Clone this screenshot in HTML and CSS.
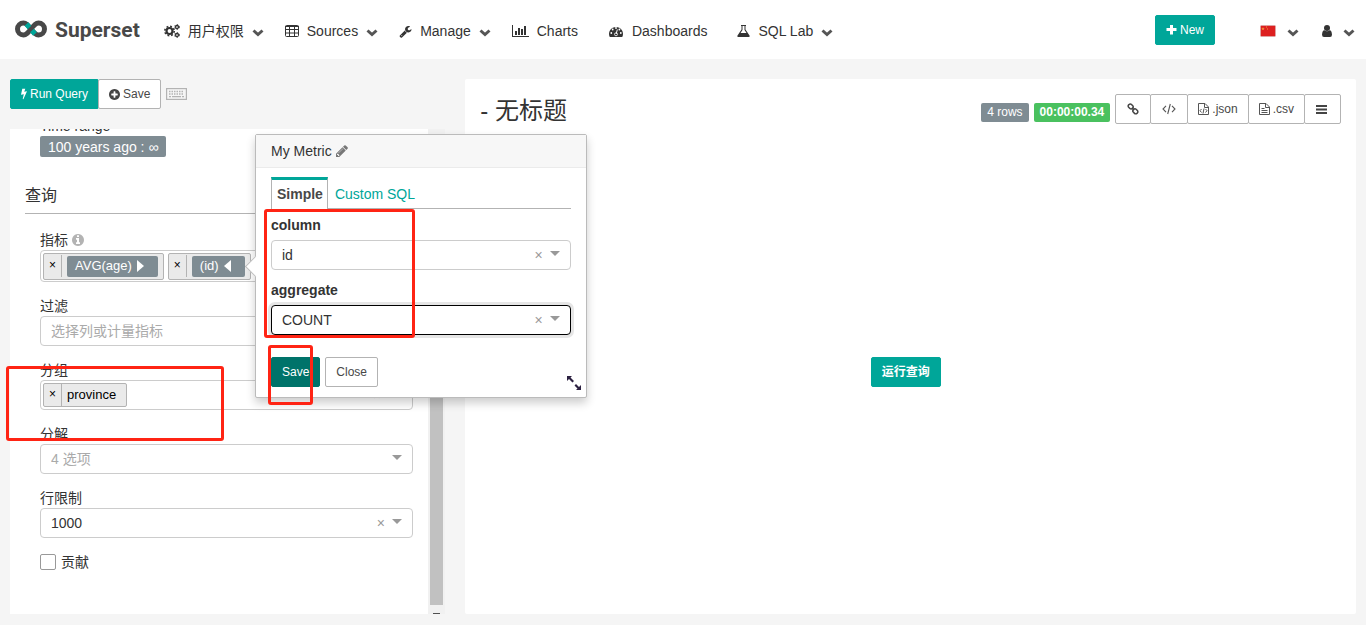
FILE: index.html
```html
<!DOCTYPE html>
<html lang="zh">
<head>
    <meta charset="UTF-8">
    <meta name="viewport" content="width=device-width, initial-scale=1.0">
    <title>Superset</title>
    <link rel="stylesheet" href="styles.css">
</head>
<body>
    <!-- shared icons -->
    <svg class="sprite" aria-hidden="true">
        <symbol id="chevron" viewBox="0 0 12 8"><path d="M1.500 1.500L6 5.500l4.500-4" fill="none" stroke="#555" stroke-width="3"/></symbol>
        <symbol id="arrow" viewBox="0 0 10 5"><path d="M0 0h10L5 5z" fill="#999"/></symbol>
    </svg>

    <header class="navbar">
        <a class="brand" href="#">
            <svg width="32" height="18" viewBox="0 0 32 18" fill="none" stroke-width="5">
                <path d="M16 9C12.500 4.500 11 3 8.500 3a6 6 0 0 0 0 12c2.500 0 4-1.500 7.500-6s5-6 7.500-6a6 6 0 0 1 0 12c-2.500 0-4-1.500-7.500-6z" stroke="#484848"/>
                <path d="M11.500 4l3 3.500M17 10.500l3 3.500" stroke="#00a699"/>
            </svg>
            <span>Superset</span>
        </a>
        <nav class="menu">
            <a href="#">
                <svg width="16" height="14" viewBox="0 0 16 14" fill="none" stroke="#333">
                    <circle cx="5.500" cy="7" r="3" stroke-width="2.200"/>
                    <circle cx="5.500" cy="7" r="4.700" stroke-width="1.600" stroke-dasharray="1.850 1.850"/>
                    <circle cx="13" cy="3" r="1.500" stroke-width="1.300"/>
                    <circle cx="13" cy="3" r="2.400" stroke-dasharray="1.250 1.250"/>
                    <circle cx="13" cy="11" r="1.500" stroke-width="1.300"/>
                    <circle cx="13" cy="11" r="2.400" stroke-dasharray="1.250 1.250"/>
                </svg>
                <span>用户权限</span>
                <svg class="chevron"><use href="#chevron"/></svg>
            </a>
            <a href="#">
                <svg width="14" height="12" viewBox="0 0 14 12" fill="none" stroke="#333">
                    <rect x="0.500" y="0.500" width="13" height="11" rx="1"/>
                    <path d="M0 1.500h14M0 4.500h14M0 8h14M4.500 1v11M9.500 1v11"/>
                </svg>
                <span>Sources</span>
                <svg class="chevron"><use href="#chevron"/></svg>
            </a>
            <a href="#">
                <svg width="13" height="13" viewBox="0 0 1792 1792" fill="#333"><path d="M448 1472q0-26-19-45t-45-19-45 19-19 45 19 45 45 19 45-19 19-45zm644-420l-682 682q-37 37-90 37-52 0-91-37l-106-108q-38-36-38-90 0-53 38-91l681-681q39 98 114.500 173.500t173.500 114.500zm634-435q0 39-23 106-47 134-164.500 217.500t-258.500 83.500q-185 0-316.500-131.500t-131.500-316.500 131.500-316.500 316.500-131.500q58 0 121.500 16.500t107.500 46.500q16 11 16 28t-16 28l-293 169v224l193 107q5-3 79-48.500t135.500-81 70.500-35.500q15 0 23.500 10t8.500 25z"/></svg>
                <span>Manage</span>
                <svg class="chevron"><use href="#chevron"/></svg>
            </a>
            <a class="plain" href="#">
                <svg width="17" height="12" viewBox="0 0 17 12" fill="#333"><path d="M0 0h1v11h16v1H0zM3 6h2v4H3zM6 3h2v7H6zM9 4h2v6H9zM12 1h2v9h-2z"/></svg>
                <span>Charts</span>
            </a>
            <a class="plain" href="#">
                <svg width="16" height="12" viewBox="0 0 16 12">
                    <path d="M1.500 11.500A7 7 0 1 1 14.500 11.500q-.3.500-.8.500H2.300q-.5 0-.8-.5z" fill="#333"/>
                    <g fill="#fff"><circle cx="3.300" cy="8" r=".9"/><circle cx="4.700" cy="4.500" r=".9"/><circle cx="8" cy="3" r=".9"/><circle cx="11.400" cy="4.500" r=".9"/><circle cx="12.800" cy="8" r=".9"/></g>
                    <path d="M9.300 4.500L8.200 9" stroke="#fff"/>
                    <circle cx="8" cy="9.300" r="1.500" fill="none" stroke="#fff" stroke-width=".8"/>
                </svg>
                <span>Dashboards</span>
            </a>
            <a href="#">
                <svg width="13" height="12" viewBox="0 0 13 12" fill="#333"><path d="M4 0h5v1H8.500v3.500l4 6q.7 1.500-.8 1.500H1.300q-1.500 0-.8-1.500l4-6V1H4zM5.500 1v4L3.500 8h6l-2-3V1z" fill-rule="evenodd"/></svg>
                <span>SQL Lab</span>
                <svg class="chevron"><use href="#chevron"/></svg>
            </a>
        </nav>
        <div class="nav-right">
            <button class="btn btn-primary btn-new">
                <svg width="11" height="11" viewBox="0 0 11 11" fill="#fff"><path d="M4 1h3v3h3.500v3H7v3.500H4V7H.5V4H4z"/></svg>
                New
            </button>
            <a href="#" aria-label="语言">
                <svg width="16" height="12" viewBox="0 0 16 12">
                    <rect x="0.500" y="0.500" width="15" height="11" rx="1" fill="#dd2020" stroke="#d9a8a8" stroke-width=".8"/>
                    <path d="M3 2l.5 1.200 1.200.1-.9.8.3 1.200L3 4.600l-1.100.7.3-1.200-.9-.8 1.200-.1zM6 1.500h1v1H6zM7 3.500h1v1H7z" fill="#f0983a"/>
                </svg>
                <svg class="chevron"><use href="#chevron"/></svg>
            </a>
            <a href="#" aria-label="用户">
                <svg width="10" height="12" viewBox="0 0 10 12" fill="#333"><circle cx="5" cy="3" r="3"/><path d="M2 5q3 2.500 6 0 2 1 2 4.500 0 2.500-2 2.500H2q-2 0-2-2.500Q0 6 2 5z"/></svg>
                <svg class="chevron"><use href="#chevron"/></svg>
            </a>
        </div>
    </header>

    <main class="explore">
        <section class="controls">
            <div class="toolbar">
                <div class="btn-group">
                    <button class="btn btn-primary">
                        <svg width="6" height="12" viewBox="0 0 7 12" fill="#fff"><path d="M1.500 0H5L3.800 3.500 7 2.800 2.800 12 2 11.700l1.300-5.500L0 7z"/></svg>
                        Run Query
                    </button>
                    <button class="btn">
                        <svg width="11" height="11" viewBox="128 128 1536 1536" fill="#444"><path d="M1344 960v-128q0-26-19-45t-45-19h-256v-256q0-26-19-45t-45-19h-128q-26 0-45 19t-19 45v256h-256q-26 0-45 19t-19 45v128q0 26 19 45t45 19h256v256q0 26 19 45t45 19h128q26 0 45-19t19-45v-256h256q26 0 45-19t19-45zm320-64q0 209-103 385.500t-279.500 279.500-385.500 103-385.500-103-279.500-279.500-103-385.500 103-385.500 279.500-279.500 385.500-103 385.500 103 279.500 279.500 103 385.500z"/></svg>
                        Save
                    </button>
                </div>
                <svg width="21" height="12" viewBox="0 0 21 12" fill="none" stroke="#b3b3b3">
                    <rect x="0.500" y="0.500" width="20" height="11" stroke-width="1.400"/>
                    <path d="M3 3.500h15M3 6h15" stroke-dasharray="1.500 1" stroke-width="1.300"/>
                    <path d="M3 8.700h2M6 8.700h9M16 8.700h2" stroke-width="1.300"/>
                </svg>
            </div>

            <div class="panel">
                <form class="fields">
                    <div class="field time">
                        <span class="name">Time range</span>
                        <button type="button" class="range">100 years ago : <span>∞</span></button>
                    </div>
                    <h2>查询</h2>
                    <div class="field">
                        <span class="name">指标
                            <svg width="12" height="12" viewBox="128 128 1536 1536" fill="#b3b3b3"><path d="M1152 1376v-160q0-14-9-23t-23-9h-96v-512q0-14-9-23t-23-9h-320q-14 0-23 9t-9 23v160q0 14 9 23t23 9h96v320h-96q-14 0-23 9t-9 23v160q0 14 9 23t23 9h448q14 0 23-9t9-23zm-128-896v-160q0-14-9-23t-23-9h-192q-14 0-23 9t-9 23v160q0 14 9 23t23 9h192q14 0 23-9t9-23zm640 416q0 209-103 385.500t-279.500 279.500-385.500 103-385.500-103-279.500-279.500-103-385.500 103-385.500 279.500-279.500 385.500-103 385.500 103 279.500 279.500 103 385.500z"/></svg>
                        </span>
                        <div class="select tokens metrics">
                            <div class="token">
                                <button type="button" class="remove">×</button>
                                <span class="metric">AVG(age) <svg width="8" height="12" viewBox="0 0 8 12"><path d="M0 0l7 6-7 6z" fill="#fff"/></svg></span>
                            </div>
                            <div class="token">
                                <button type="button" class="remove">×</button>
                                <span class="metric">(id) <svg width="8" height="12" viewBox="0 0 8 12"><path d="M7 0L0 6l7 6z" fill="#fff"/></svg></span>
                            </div>
                        </div>
                    </div>
                    <div class="field">
                        <label class="name" for="filters">过滤</label>
                        <div class="select">
                            <select id="filters" class="empty"><option>选择列或计量指标</option></select>
                            <svg class="arrow"><use href="#arrow"/></svg>
                        </div>
                    </div>
                    <div class="field">
                        <span class="name">分组</span>
                        <div class="select tokens">
                            <div class="token">
                                <button type="button" class="remove">×</button>
                                <span class="value">province</span>
                            </div>
                            <button type="button" class="clear">×</button>
                            <svg class="arrow"><use href="#arrow"/></svg>
                        </div>
                    </div>
                    <div class="field">
                        <label class="name" for="columns">分解</label>
                        <div class="select">
                            <select id="columns" class="empty"><option>4 选项</option></select>
                            <svg class="arrow"><use href="#arrow"/></svg>
                        </div>
                    </div>
                    <div class="field">
                        <label class="name" for="limit">行限制</label>
                        <div class="select">
                            <select id="limit"><option>1000</option></select>
                            <button type="button" class="clear">×</button>
                            <svg class="arrow"><use href="#arrow"/></svg>
                        </div>
                    </div>
                    <div class="field check">
                        <input type="checkbox" id="contribution">
                        <label for="contribution">贡献</label>
                    </div>
                </form>
                <div class="scrollbar">
                    <div class="thumb"></div>
                    <div class="scroll-end"></div>
                </div>
            </div>
        </section>

        <section class="result">
            <div class="chart">
                <div class="chart-head">
                    <h1>- 无标题</h1>
                    <div class="chart-tools">
                        <span class="label">4 rows</span>
                        <span class="label label-success">00:00:00.34</span>
                        <div class="btn-group">
                            <button class="btn btn-icon" aria-label="link">
                                <svg width="12" height="12" viewBox="0 0 12 12" fill="none" stroke="#444" stroke-width="1.500"><rect x="-2.600" y="-2" width="5.200" height="4" rx="1.700" transform="translate(3.700 3.500) rotate(45)"/><rect x="-2.600" y="-2" width="5.200" height="4" rx="1.700" transform="translate(8.300 8.300) rotate(45)"/><path d="M4.800 4.800l2.400 2.400"/></svg>
                            </button>
                            <button class="btn btn-icon" aria-label="code">
                                <svg width="14" height="12" viewBox="0 0 14 12" fill="none" stroke="#555" stroke-width="1.100"><path d="M4 2.800L1 6l3 3.200M10 2.800L13 6l-3 3.200M8.300 1L5.700 11"/></svg>
                            </button>
                            <button class="btn">
                                <svg width="11" height="12" viewBox="0 0 11 12" fill="none" stroke="#555"><path d="M.5.500h6.500l3.500 3.500v7.500H.5zM6.500.5v4h4M3.500 6L2 7.700l1.500 1.800M7.500 6L9 7.700 7.500 9.500M6 5.500l-1 5"/></svg>
                                .json
                            </button>
                            <button class="btn">
                                <svg width="11" height="12" viewBox="0 0 11 12" fill="none" stroke="#555"><path d="M.5.500h6.500l3.500 3.500v7.500H.5zM6.500.5v4h4M2.500 5.500h3M2.500 7.500h6M2.500 9.500h6"/></svg>
                                .csv
                            </button>
                            <button class="btn btn-icon" aria-label="menu">
                                <svg width="13" height="9" viewBox="0 0 13 9" fill="#444"><path d="M0 0h11v2H0zM0 3.500h11v2H0zM0 7h11v2H0z"/></svg>
                            </button>
                        </div>
                    </div>
                </div>
                <div class="chart-body">
                    <button class="btn btn-primary">运行查询</button>
                </div>
            </div>
        </section>
    </main>

    <!-- metric editor -->
    <div class="popover">
        <div class="popover-title">
            <span>My Metric</span>
            <svg width="12" height="12" viewBox="128 128 1536 1536" fill="#777"><path d="M491 1536l91-91-235-235-91 91v107h128v128h107zm523-928q0-22-22-22-10 0-17 7l-542 542q-7 7-7 17 0 22 22 22 10 0 17-7l542-542q7-7 7-17zm-54-192l416 416-832 832h-416v-416zm683 96q0 53-37 90l-166 166-416-416 166-165q36-38 90-38 53 0 91 38l235 234q37 39 37 91z"/></svg>
        </div>
        <div class="popover-content">
            <div class="tabs">
                <a class="active" href="#">Simple</a>
                <a href="#">Custom SQL</a>
            </div>
            <label for="column">column</label>
            <div class="select">
                <select id="column"><option>id</option></select>
                <button class="clear">×</button>
                <svg class="arrow"><use href="#arrow"/></svg>
            </div>
            <label for="aggregate">aggregate</label>
            <div class="select focused">
                <select id="aggregate"><option>COUNT</option></select>
                <button class="clear">×</button>
                <svg class="arrow"><use href="#arrow"/></svg>
            </div>
            <div class="actions">
                <button class="btn btn-primary btn-save">Save</button>
                <button class="btn">Close</button>
            </div>
        </div>
        <svg class="resize" width="16" height="16" viewBox="0 0 16 16"><path d="M1 1h5L4.500 2.500 8 6 6.500 7.500 3 4 1 6zM15 15h-5l1.500-1.500L8.500 10.500 10 9l3 3 2-2z" fill="#2b2040"/></svg>
    </div>

    <!-- highlighted steps -->
    <div class="mark mark-metric"></div>
    <div class="mark mark-save"></div>
    <div class="mark mark-group"></div>
</body>
</html>
```
FILE: styles.css
```css
* {
    box-sizing: border-box;
}
body {
    margin: 0;
    height: 100vh;
    display: flex;
    flex-direction: column;
    background: #f5f5f5;
    color: #333;
    font-family: "Liberation Sans", "Noto Sans CJK SC", sans-serif;
    font-size: 14px;
    line-height: 20px;
}
a {
    color: #333;
    text-decoration: none;
}
svg {
    flex: none;
}
button,
select {
    font-family: inherit;
    color: inherit;
}
.sprite {
    position: absolute;
    width: 0;
    height: 0;
}

/* navbar */
.navbar {
    flex: none;
    display: flex;
    align-items: center;
    height: 59px;
    padding: 0 11px 0 15px;
    background: #fff;
}
.brand {
    display: flex;
    align-items: center;
    gap: 8px;
    margin-right: 24px;
    color: #484848;
    font: bold 21px/24px Roboto, sans-serif;
}
.brand svg {
    margin-bottom: 2px;
}
.menu {
    display: flex;
    gap: 21px;
    padding-top: 3px;
}
.menu a,
.nav-right a {
    display: flex;
    align-items: center;
    gap: 8px;
}
.menu .plain {
    padding-right: 9px;
}
.chevron {
    width: 12px;
    height: 8px;
    margin-top: 4px;
}
.nav-right {
    display: flex;
    align-items: center;
    gap: 23px;
    margin-left: auto;
}
.nav-right a {
    gap: 11px;
    padding-top: 3px;
}
.btn-new {
    margin-right: 22px;
}

/* buttons */
.btn {
    display: inline-flex;
    align-items: center;
    justify-content: center;
    gap: 3px;
    height: 30px;
    padding: 0 10px;
    border: 1px solid #b3b3b3;
    border-radius: 2px;
    background: #fff;
    color: #484848;
    font-size: 12px;
    line-height: 18px;
    cursor: pointer;
}
.btn-primary {
    border-color: #00a699;
    background: #00a699;
    color: #fff;
}
.btn-save {
    border-color: #00736a;
    background: #00736a;
}
.btn-icon {
    padding: 0 11px;
}
.btn-group {
    display: flex;
}
.btn-group .btn + .btn {
    margin-left: -1px;
}

/* layout */
.explore {
    flex: 1;
    min-height: 0;
    display: grid;
    grid-template-columns: 1fr 2fr;
    padding: 20px 0 11px;
}
.controls,
.result {
    display: flex;
    flex-direction: column;
    min-width: 0;
    min-height: 0;
    padding: 0 10px;
}
.toolbar {
    display: flex;
    align-items: center;
    gap: 5px;
    margin-bottom: 20px;
}
.panel {
    flex: 1;
    min-height: 0;
    display: flex;
    overflow: hidden;
    background: #fff;
}
.scrollbar {
    display: flex;
    flex-direction: column;
    align-items: center;
    width: 17px;
    padding-top: 20px;
    background: #f1f1f1;
}
.thumb {
    flex: 1;
    width: 13px;
    background: #c1c1c1;
}
.scroll-end {
    width: 7px;
    height: 9px;
    border-bottom: 1px solid #505050;
}

/* control panel */
.fields {
    flex: 1;
    min-width: 0;
    margin-top: -13px;
    padding: 0 15px;
}
.fields h2 {
    margin: 0 0 16px;
    padding: 2px 0 5px;
    border-bottom: 1px solid #b3b3b3;
    font-size: 16px;
    font-weight: normal;
    line-height: 24px;
}
.field {
    margin: 0 0 14px 15px;
}
.name {
    display: block;
}
.name svg {
    vertical-align: -1px;
}
.time {
    margin-bottom: 25px;
}
.range {
    display: block;
    height: 21px;
    padding: 0 8px;
    border: 0;
    border-radius: 2px;
    background: #7f8c93;
    color: #fff;
    font-size: 14px;
    line-height: 20px;
}
.select {
    display: flex;
    align-items: center;
    height: 30px;
    padding-right: 10px;
    border: 1px solid #ccc;
    border-radius: 4px;
    background: #fff;
}
.select select {
    flex: 1;
    min-width: 0;
    height: 28px;
    padding: 0 10px;
    border: 0;
    outline: 0;
    background: none;
    appearance: none;
    font-size: 14px;
}
.select .empty {
    color: #aaa;
}
.select .clear {
    width: 17px;
    margin-right: 3px;
    padding: 0;
    border: 0;
    background: none;
    color: #999;
    font-size: 14px;
    line-height: 20px;
}
.arrow {
    width: 10px;
    height: 5px;
    margin-bottom: 3px;
}
.focused {
    border-color: #000;
    box-shadow: 0 0 0 3px #e6e6e6;
}
.tokens {
    gap: 4px;
    padding-left: 2px;
}
.tokens .clear {
    margin-left: auto;
}
.metrics {
    height: 32px;
}
.token {
    display: flex;
    align-items: center;
    height: 24px;
    padding-right: 5px;
    border: 1px solid #b3b3b3;
    border-radius: 2px;
    background: #eaeaea;
    color: #000;
}
.remove {
    width: 18px;
    height: 22px;
    padding: 0 0 2px;
    border: 0;
    border-right: 1px solid #b3b3b3;
    background: none;
    font-size: 12px;
}
.value {
    padding: 0 5px;
    font-size: 13px;
}
.metrics .token {
    height: 27px;
}
.metric {
    display: flex;
    align-items: center;
    gap: 5px;
    height: 21px;
    margin-left: 5px;
    padding: 0 13px 0 8px;
    border-radius: 2px;
    background: #7f8c93;
    color: #fff;
    font-size: 13px;
}
.check {
    display: flex;
    align-items: center;
    gap: 5px;
}
.check input {
    width: 16px;
    height: 16px;
    margin: 0;
    border: 1px solid #999;
    border-radius: 2px;
    appearance: none;
}

/* chart */
.chart {
    flex: 1;
    display: flex;
    flex-direction: column;
    padding: 15px;
    border-radius: 2px;
    background: #fff;
}
.chart-head {
    display: flex;
    justify-content: space-between;
    align-items: flex-start;
}
.chart-head h1 {
    margin: 0;
    font-size: 24px;
    font-weight: normal;
    line-height: 34px;
}
.chart-tools {
    display: flex;
    align-items: center;
    gap: 5px;
}
.label {
    height: 19px;
    margin-top: 6px;
    padding: 0 6px;
    border-radius: 2px;
    background: #7f8c93;
    color: #fff;
    font-size: 12px;
    line-height: 19px;
}
.label-success {
    background: #4ac15f;
    font-weight: bold;
}
.chart-body {
    flex: 1;
    display: flex;
    align-items: center;
    justify-content: center;
    padding: 17px 10px 0 0;
}
.chart-body .btn {
    font-weight: bold;
}

/* popover */
.popover {
    position: absolute;
    left: 255px;
    top: 134px;
    width: 332px;
    border: 1px solid #bbb;
    border-radius: 2px;
    background: #fff;
    box-shadow: 0 5px 10px rgba(0, 0, 0, 0.2);
}
.popover::before {
    content: "";
    position: absolute;
    left: -8px;
    top: 124px;
    width: 14px;
    height: 14px;
    border: solid #bbb;
    border-width: 0 0 1px 1px;
    background: #fff;
    transform: rotate(45deg);
}
.popover-title {
    display: flex;
    align-items: center;
    gap: 4px;
    height: 33px;
    padding: 0 15px;
    border-bottom: 1px solid #ebebeb;
    background: #f7f7f7;
}
.popover-content {
    padding: 9px 15px 10px;
}
.popover-content label {
    display: block;
    margin: 10px 0 5px;
    font-weight: bold;
}
.tabs {
    display: flex;
    height: 32px;
    border-bottom: 1px solid #b3b3b3;
}
.tabs + label {
    margin-top: 6px;
}
.tabs a {
    height: 32px;
    padding: 4px 7px 0;
    border-top: 3px solid transparent;
    color: #00a699;
}
.tabs .active {
    padding: 4px 4px 0 5px;
    border: 1px solid #b3b3b3;
    border-top: 3px solid #00a699;
    border-bottom: 0;
    background: #fff;
    color: #484848;
    font-weight: bold;
}
.actions {
    display: flex;
    gap: 5px;
    margin-top: 22px;
}
.resize {
    position: absolute;
    right: 4px;
    bottom: 6px;
}

/* red frames over the page */
.mark {
    position: absolute;
    border: 3px solid #ff2414;
    border-radius: 3px;
    pointer-events: none;
}
.mark-metric {
    left: 264px;
    top: 209px;
    width: 151px;
    height: 129px;
}
.mark-save {
    left: 268px;
    top: 345px;
    width: 45px;
    height: 60px;
}
.mark-group {
    left: 6px;
    top: 366px;
    width: 218px;
    height: 75px;
}
```
